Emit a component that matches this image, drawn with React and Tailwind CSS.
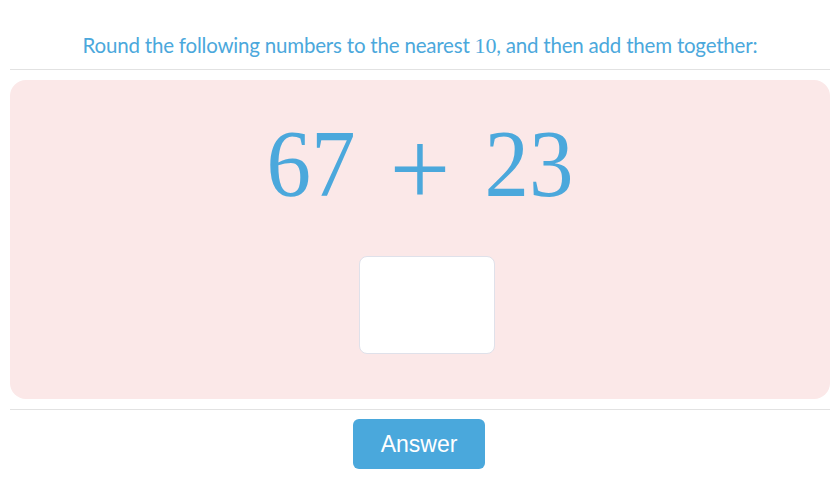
import React from 'react';

const App = () => {
    return (
        <div className="w-[840px] h-[501px] bg-white flex flex-col items-center overflow-hidden" style={{ fontFamily: 'Lato, "Noto Sans", sans-serif' }}>
            <div className="h-[69px] w-full flex items-center justify-center pt-[22px]">
                <p className="text-[20.5px] leading-none text-[#4ba8dc] tracking-[-0.2px]">
                    Round the following numbers to the nearest <span className="font-['Liberation_Serif',serif] text-[22px]">10</span>, and then add them together:
                </p>
            </div>
            <div className="w-[820px] border-t border-[#e2e2e2]" />
            <div className="w-[820px] h-[319px] mt-[10px] bg-[#fbe8e8] rounded-[16px] flex flex-col items-center">
                <div className="mt-[34px] h-[100px] flex items-center text-[#4ba8dc] font-['Liberation_Serif',serif] text-[89px] leading-none">
                    <span className="scale-y-[1.06]">67</span>
                    <span className="mx-[34px] text-[108px] mt-[10px]">+</span>
                    <span className="scale-y-[1.06]">23</span>
                </div>
                <input type="text" className="mt-[42px] ml-[14px] w-[136px] h-[98px] bg-white border border-[#dfe1ea] rounded-[8px] outline-none" />
            </div>
            <div className="w-[820px] border-t border-[#e2e2e2] mt-[10px]" />
            <button className="mt-[9px] mr-[2px] w-[132px] h-[50px] bg-[#4aa8dc] rounded-[6px] text-white text-[23px] font-['Liberation_Sans',sans-serif]">
                Answer
            </button>
        </div>
    );
};

export default App;
